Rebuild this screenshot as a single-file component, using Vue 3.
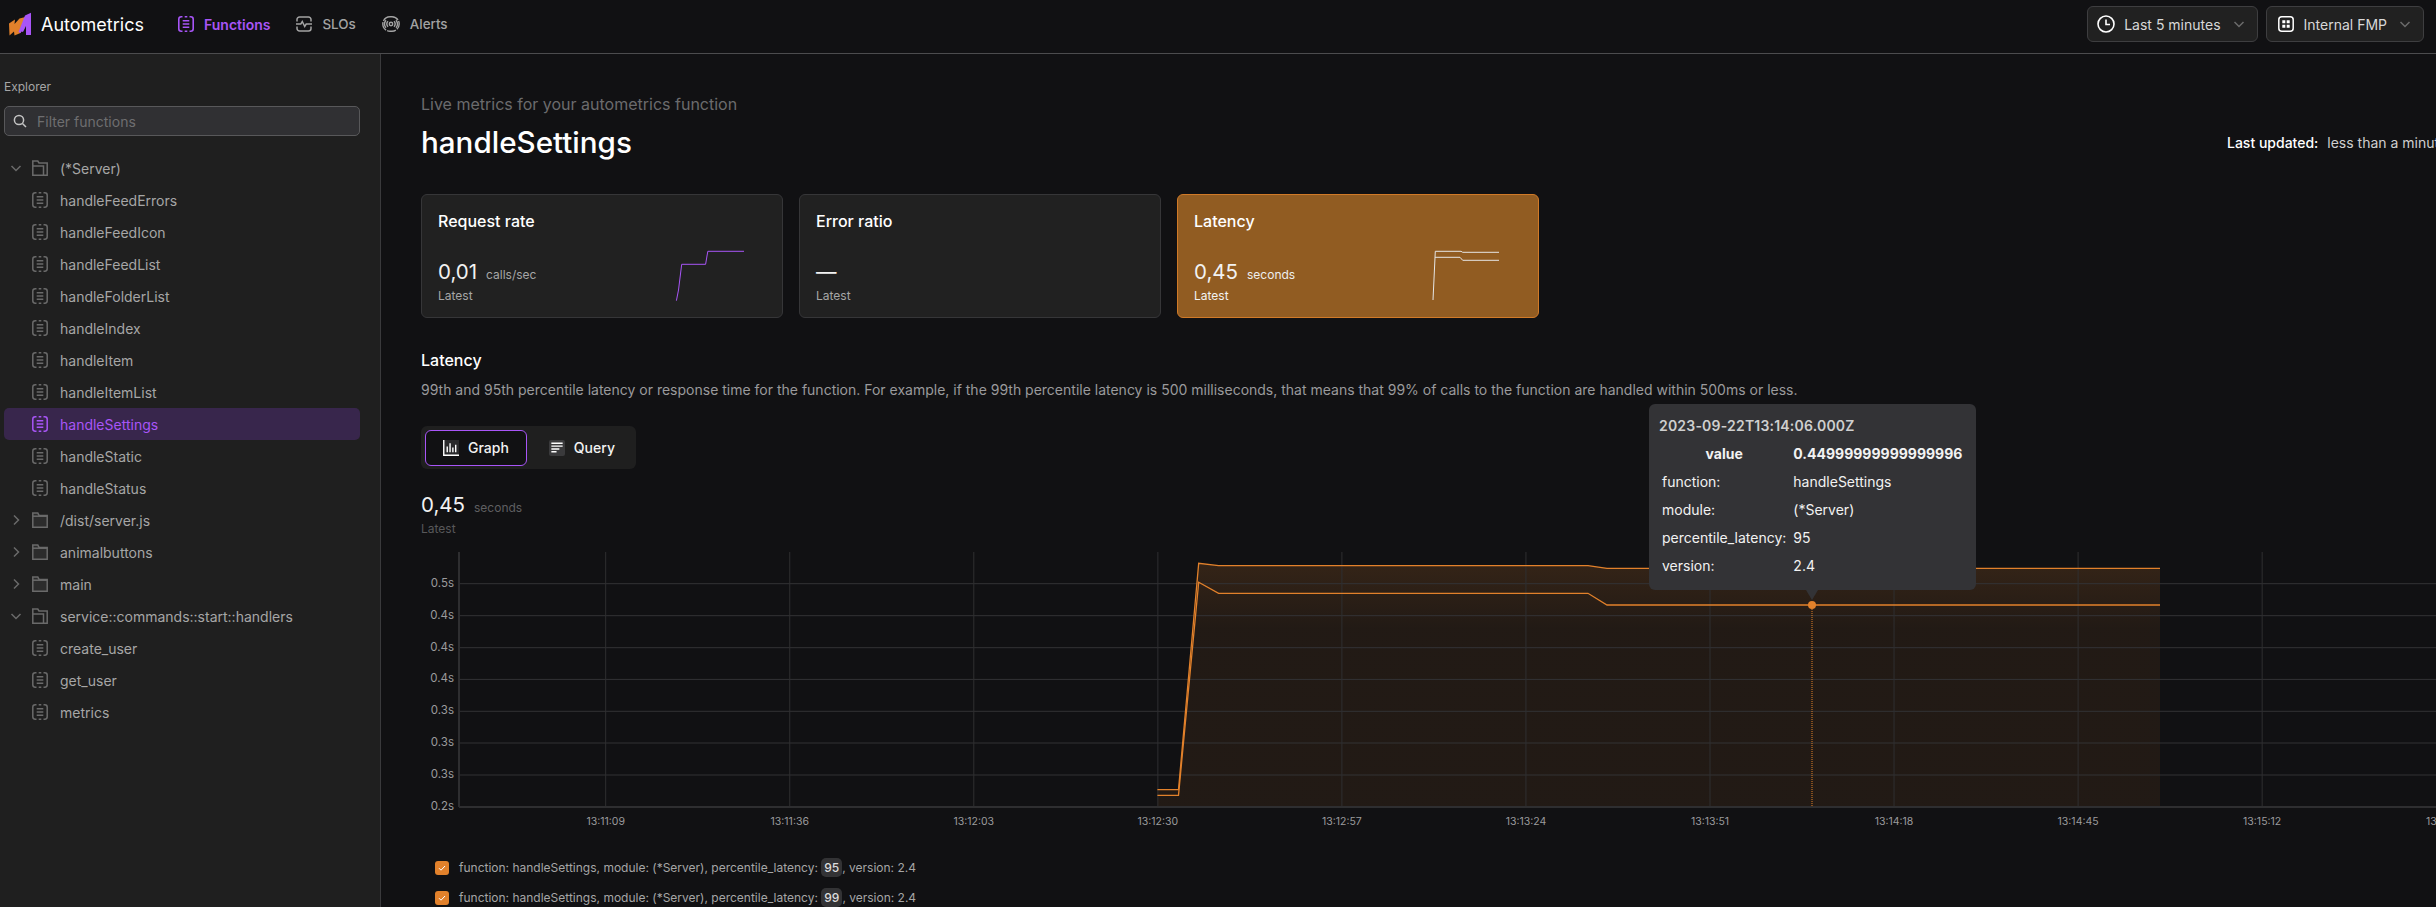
<script setup>
const tree = [
  { name: '(*Server)', kind: 'open' },
  { name: 'handleFeedErrors', kind: 'fn' },
  { name: 'handleFeedIcon', kind: 'fn' },
  { name: 'handleFeedList', kind: 'fn' },
  { name: 'handleFolderList', kind: 'fn' },
  { name: 'handleIndex', kind: 'fn' },
  { name: 'handleItem', kind: 'fn' },
  { name: 'handleItemList', kind: 'fn' },
  { name: 'handleSettings', kind: 'fn', active: true },
  { name: 'handleStatic', kind: 'fn' },
  { name: 'handleStatus', kind: 'fn' },
  { name: '/dist/server.js', kind: 'closed' },
  { name: 'animalbuttons', kind: 'closed' },
  { name: 'main', kind: 'closed' },
  { name: 'service::commands::start::handlers', kind: 'open' },
  { name: 'create_user', kind: 'fn' },
  { name: 'get_user', kind: 'fn' },
  { name: 'metrics', kind: 'fn' },
]

const cards = [
  {
    title: 'Request rate', value: '0,01', unit: 'calls/sec',
    box: '672 250 72 52',
    lines: ['675.4,300.7 677.5,290 680.7,264.3 704.6,264.3 706.8,251.3 743,251.3'],
  },
  { title: 'Error ratio', value: '—', unit: '', box: '', lines: [] },
  {
    title: 'Latency', value: '0,45', unit: 'seconds', active: true,
    box: '1429 250 72 52',
    lines: [
      '1433,300 1435.3,251.3 1461,251.3 1462.7,252.3 1499,252.3',
      '1435,257.3 1460,257.3 1462.7,260.3 1499,260.3',
    ],
  },
]

// 坐标直接用页面像素，viewBox 对齐到图表左上角
const yTicks = [
  { y: 583.7, label: '0.5s' },
  { y: 615.7, label: '0.4s' },
  { y: 647.7, label: '0.4s' },
  { y: 679.4, label: '0.4s' },
  { y: 711.3, label: '0.3s' },
  { y: 743, label: '0.3s' },
  { y: 775, label: '0.3s' },
  { y: 806.7, label: '0.2s' },
]
const xLabels = ['13:11:09', '13:11:36', '13:12:03', '13:12:30', '13:12:57', '13:13:24', '13:13:51', '13:14:18', '13:14:45', '13:15:12', '13:15:39']
const xTicks = xLabels.map((label, i) => ({ x: 605.7 + i * 184.05, label }))

const topLine = '1157.4,789.7 1178.5,789.7 1198.7,563.3 1218.6,565.7 1588,565.7 1607,568.3 2160,568.3'
const lowLine = '1157.4,795.3 1178.5,795.3 1198.7,582.3 1218.6,593.3 1588,593.3 1607,605 2160,605'
const areaTop = `1157.4,806 ${topLine} 2160,806`

const tooltipRows = [
  ['function:', 'handleSettings'],
  ['module:', '(*Server)'],
  ['percentile_latency:', '95'],
  ['version:', '2.4'],
]
const legend = ['95', '99']
</script>

<template>
  <div class="app">
    <header class="topbar">
      <div class="brand">
        <svg class="logo" width="24" height="24" viewBox="8 12 24 24">
          <path fill="#e2812b" d="M9 23.500l6-4-.5 4.500 5-5.500 6-1.500v5l-5 11-6 2.500-.5-4-4.500 4z" />
          <path fill="#a855f7" d="M31 12.700V35h-5v-9l-3 6-1.500-.5-1 1.500-2-1 6.500-16.500z" />
        </svg>
        <span>Autometrics</span>
      </div>
      <nav class="nav">
        <a class="nav-item active">
          <svg width="16" height="16" viewBox="0 0 16 16" fill="none" stroke="currentColor" stroke-width="1.600">
            <path d="M4.500 .8H3.200A2.400 2.400 0 0 0 .8 3.200v9.600a2.400 2.400 0 0 0 2.400 2.400h1.300M11.500 .8h1.300a2.400 2.400 0 0 1 2.400 2.400v9.600a2.400 2.400 0 0 1-2.400 2.400h-1.300M6.700 .8h2.600M6.700 15.200h2.600M4.700 4.800h6.600M4.700 8h6.600M4.700 11.200h6.600" />
          </svg>
          Functions
        </a>
        <a class="nav-item">
          <svg width="16" height="16" viewBox="0 0 16 16" fill="none" stroke="currentColor" stroke-width="1.500">
            <path d="M1 5.500V3.500A2.500 2.500 0 0 1 3.500 1h9A2.500 2.500 0 0 1 15 3.500v2M1 10.500v2A2.500 2.500 0 0 0 3.500 15h9a2.500 2.500 0 0 0 2.500-2.500v-2M0 8h4.800l1.500-2.500 2.400 5 1.500-2.500H16" />
          </svg>
          SLOs
        </a>
        <a class="nav-item">
          <svg width="18" height="16" viewBox="0 0 18 16" fill="none" stroke="currentColor" stroke-width="1.400">
            <rect x=".8" y=".8" width="16.400" height="14.400" rx="7.200" stroke-dasharray="9 1.200" />
            <circle cx="9" cy="8" r="1.700" />
            <path d="M6 5.300a4 4 0 0 0 0 5.400M12 5.300a4 4 0 0 1 0 5.400M4 4.200a6 6 0 0 0 0 7.600M14 4.200a6 6 0 0 1 0 7.600" />
          </svg>
          Alerts
        </a>
      </nav>
      <div class="selects">
        <button class="select">
          <svg width="18" height="18" viewBox="0 0 18 18" fill="none" stroke="#fff" stroke-width="1.600">
            <circle cx="9" cy="9" r="8" />
            <path d="M9 4.500V9.500H13" />
          </svg>
          <span>Last 5 minutes</span>
          <svg class="chev" width="12" height="12" viewBox="0 0 12 12" fill="none" stroke="currentColor" stroke-width="1.500"><path d="M1.500 4l4.500 4.500L10.500 4" /></svg>
        </button>
        <button class="select">
          <svg class="grid-ico" width="16" height="16" viewBox="0 0 16 16" fill="none" stroke="#fff" stroke-width="1.500">
            <rect x=".8" y=".8" width="14.400" height="14.400" rx="3" />
            <path fill="#fff" stroke="none" d="M4.300 4.300h3v3h-3zM8.700 4.300h3v3h-3zM4.300 8.700h3v3h-3zM8.700 8.700h3v3h-3z" />
          </svg>
          <span>Internal FMP</span>
          <svg class="chev" width="12" height="12" viewBox="0 0 12 12" fill="none" stroke="currentColor" stroke-width="1.500"><path d="M1.500 4l4.500 4.500L10.500 4" /></svg>
        </button>
      </div>
    </header>

    <div class="body">
      <aside class="sidebar">
        <div class="explorer">Explorer</div>
        <label class="filter">
          <svg width="14" height="14" viewBox="0 0 14 14" fill="none" stroke="#c4c4c4" stroke-width="1.500">
            <circle cx="6" cy="6" r="4.600" />
            <path d="M9.500 9.500L13 13" />
          </svg>
          <input placeholder="Filter functions" />
        </label>
        <ul class="tree">
          <li v-for="item in tree" :key="item.name" class="row" :class="{ active: item.active }">
            <span class="twist">
              <svg v-if="item.kind === 'open'" width="12" height="12" viewBox="0 0 12 12" fill="none" stroke="currentColor" stroke-width="1.500"><path d="M1.500 4l4.500 4.500L10.500 4" /></svg>
              <svg v-else-if="item.kind === 'closed'" width="12" height="12" viewBox="0 0 12 12" fill="none" stroke="currentColor" stroke-width="1.500"><path d="M4 1.500L8.500 6 4 10.500" /></svg>
            </span>
            <svg v-if="item.kind === 'fn'" class="ico" width="16" height="16" viewBox="0 0 16 16" fill="none" stroke="currentColor" stroke-width="1.500">
              <path d="M4.500 .8H3.200A2.400 2.400 0 0 0 .8 3.200v9.600a2.400 2.400 0 0 0 2.400 2.400h1.300M11.500 .8h1.300a2.400 2.400 0 0 1 2.400 2.400v9.600a2.400 2.400 0 0 1-2.400 2.400h-1.300M6.700 .8h2.600M6.700 15.200h2.600M4.700 4.800h6.600M4.700 8h6.600M4.700 11.200h6.600" />
            </svg>
            <svg v-else-if="item.kind === 'open'" class="ico" width="16" height="16" viewBox="0 0 16 16" fill="none" stroke="currentColor" stroke-width="1.500">
              <path d="M.8 15.200V1h5l1.200 2h8.200v12.200zM.8 6H11.500v9.200" />
            </svg>
            <svg v-else class="ico" width="16" height="16" viewBox="0 0 16 16" stroke="currentColor" stroke-width="1.500" fill="#2c2c2c">
              <path d="M.8 15.200V1h5l1.200 2.400h8.200v11.800z" />
              <path d="M.8 4.200h14.400" fill="none" />
            </svg>
            <span class="label">{{ item.name }}</span>
          </li>
        </ul>
      </aside>

      <main class="main">
        <p class="sub">Live metrics for your autometrics function</p>
        <div class="title-row">
          <h1>handleSettings</h1>
          <div class="updated"><b>Last updated:</b> less than a minute ago</div>
        </div>

        <section class="cards">
          <div v-for="c in cards" :key="c.title" class="card" :class="{ active: c.active }">
            <div class="card-text">
              <div class="card-title">{{ c.title }}</div>
              <div class="stat"><span class="num">{{ c.value }}</span><span class="unit">{{ c.unit }}</span></div>
              <div class="latest">Latest</div>
            </div>
            <svg v-if="c.box" class="spark" width="72" height="52" :viewBox="c.box" fill="none">
              <polyline v-for="l in c.lines" :key="l" :points="l" />
            </svg>
          </div>
        </section>

        <h2>Latency</h2>
        <p class="desc">99th and 95th percentile latency or response time for the function. For example, if the 99th percentile latency is 500 milliseconds, that means that 99% of calls to the function are handled within 500ms or less.</p>

        <div class="tabs">
          <button class="tab on">
            <svg width="16" height="16" viewBox="0 0 17 17">
              <rect x="1" y="0" width="16" height="16" fill="#2a2a2c" />
              <path fill="none" stroke="#fff" stroke-width="1.500" d="M.8 0V16.200H17M4.500 13V7M7.500 13V3.500M10.500 13V8M13.500 13V5" />
            </svg>
            Graph
          </button>
          <button class="tab">
            <svg width="16" height="16" viewBox="0 0 17 17">
              <rect width="17" height="17" rx="2" fill="#3a3a3c" />
              <path fill="none" stroke="#fff" stroke-width="1.500" d="M2.500 3.500H14.500M2.500 6.500H14.500M2.500 9.500H11M2.500 12.500H8" />
            </svg>
            Query
          </button>
        </div>

        <div class="stat big"><span class="num">0,45</span><span class="unit">seconds</span></div>
        <div class="latest dim">Latest</div>

        <div class="chart">
          <svg width="2060" height="290" viewBox="421 544 2060 290" class="plot">
            <defs>
              <linearGradient id="fade" gradientUnits="userSpaceOnUse" x1="0" y1="563" x2="0" y2="806">
                <stop offset="0" stop-color="#e2812b" stop-opacity="0.17" />
                <stop offset="0.27" stop-color="#e2812b" stop-opacity="0.08" />
                <stop offset="1" stop-color="#e2812b" stop-opacity="0.08" />
              </linearGradient>
            </defs>
            <polygon :points="areaTop" fill="url(#fade)" />
            <line v-for="t in yTicks" :key="t.y" x1="459" x2="2481" :y1="t.y" :y2="t.y" class="grid" />
            <line v-for="t in xTicks" :key="t.x" :x1="t.x" :x2="t.x" y1="552" y2="806" class="grid v" />
            <line x1="459" x2="459" y1="552" y2="807" class="axis" />
            <line x1="459" x2="2481" y1="807" y2="807" class="axis" />
            <text v-for="t in yTicks" :key="'y' + t.y" x="454" :y="t.y + 3" text-anchor="end" class="tick">{{ t.label }}</text>
            <text v-for="t in xTicks" :key="t.label" :x="t.x" y="825" text-anchor="middle" class="tick x">{{ t.label }}</text>
            <polyline :points="topLine" class="series" />
            <polyline :points="lowLine" class="series" />
            <line x1="1812" x2="1812" y1="605" y2="806" class="cursor" />
            <circle cx="1812" cy="605" r="4" fill="#e2812b" />
          </svg>

          <div class="tip">
            <div class="tip-time">2023-09-22T13:14:06.000Z</div>
            <table>
              <tr class="tip-value"><th>value</th><th class="val">0.44999999999999996</th></tr>
              <tr v-for="r in tooltipRows" :key="r[0]"><td>{{ r[0] }}</td><td class="val">{{ r[1] }}</td></tr>
            </table>
          </div>
        </div>

        <ul class="legend">
          <li v-for="p in legend" :key="p">
            <span class="check">
              <svg width="8" height="8" viewBox="0 0 8 8" fill="none" stroke="#fff" stroke-width="1"><path d="M1 4.200l2 2L7 2" /></svg>
            </span>
            <span>function: handleSettings, module: (*Server), percentile_latency: <em class="pill">{{ p }}</em>, version: 2.4</span>
          </li>
        </ul>
      </main>
    </div>
  </div>
</template>

<style scoped>
.app {
  width: 2436px;
  height: 907px;
  overflow: hidden;
  display: flex;
  flex-direction: column;
  background: #111113;
  color: #fff;
  font-family: Inter, "Liberation Sans", sans-serif;
  font-size: 14px;
}
.topbar {
  flex: none;
  height: 54px;
  box-sizing: border-box;
  border-bottom: 1px solid #4c4c4e;
  display: flex;
  align-items: center;
  padding: 0 12px 5px 8px;
}
.brand {
  display: flex;
  align-items: center;
  gap: 9px;
  font-size: 18px;
  width: 170px;
}
.logo {
  flex: none;
}
.nav {
  display: flex;
  gap: 26px;
}
.nav-item {
  display: flex;
  align-items: center;
  gap: 10px;
  font-size: 13.400px;
  font-weight: 500;
  color: #a3a3a3;
}
.nav-item.active {
  color: #a855f7;
  font-size: 14px;
  font-weight: 600;
}
.selects {
  margin-left: auto;
  display: flex;
  gap: 8px;
}
.select {
  height: 36px;
  box-sizing: border-box;
  display: flex;
  align-items: center;
  gap: 9px;
  padding: 0 12px 0 9px;
  background: #212121;
  border: 1px solid #3e3e40;
  border-radius: 6px;
  color: #d8d8d8;
  font: inherit;
}
.select .grid-ico {
  margin: 0 1px 0 2px;
}
.select .chev {
  margin-left: 3px;
  color: #6b6b6b;
}
.body {
  flex: 1;
  display: flex;
  min-height: 0;
}
.sidebar {
  flex: none;
  width: 381px;
  box-sizing: border-box;
  background: #1f1f1f;
  border-right: 1px solid #3a3a3c;
  padding: 24px 20px 0 4px;
}
.explorer {
  font-size: 12px;
  line-height: 18px;
  color: #a6a6a6;
}
.filter {
  margin-top: 10px;
  height: 30px;
  box-sizing: border-box;
  display: flex;
  align-items: center;
  gap: 10px;
  padding: 0 8px;
  background: #303033;
  border: 1px solid #58585a;
  border-radius: 5px;
}
.filter input {
  flex: 1;
  background: none;
  border: 0;
  outline: 0;
  padding: 0;
  font: inherit;
  font-size: 14px;
  color: #ccc;
}
.filter input::placeholder {
  color: #6e6e70;
}
.tree {
  list-style: none;
  margin: 16px 0 0;
  padding: 0;
}
.row {
  height: 32px;
  display: flex;
  align-items: center;
  border-radius: 5px;
  color: #a6a6a6;
  padding-left: 6px;
}
.twist {
  width: 22px;
  display: flex;
  color: #6a6a6a;
}
.ico {
  flex: none;
  color: #6a6a6a;
  margin-right: 12px;
}
.row.active {
  background: #38264c;
  color: #a855f7;
}
.row.active .ico {
  color: #a855f7;
}
.main {
  flex: 1;
  min-width: 0;
  overflow: hidden;
  padding: 40px 0 0 40px;
}
.sub {
  margin: 0;
  font-size: 16px;
  line-height: 20px;
  color: #6b6b6d;
}
.title-row {
  margin-top: 8px;
  display: flex;
  align-items: center;
  height: 40px;
}
h1 {
  margin: 0;
  font-size: 29.600px;
  font-weight: 500;
  line-height: 40px;
  width: 1806px;
  flex: none;
}
.updated {
  white-space: nowrap;
  color: #cfcfcf;
}
.updated b {
  font-weight: 500;
  color: #fff;
  margin-right: 5px;
}
.cards {
  margin-top: 32px;
  display: grid;
  grid-template-columns: repeat(3, 362px);
  gap: 16px;
}
.card {
  height: 124px;
  box-sizing: border-box;
  display: flex;
  justify-content: space-between;
  padding: 14px 16px 15px;
  background: #212121;
  border: 1px solid #363638;
  border-radius: 6px;
}
.card.active {
  background: #915c22;
  border-color: #d07a28;
}
.card-title {
  font-size: 16px;
  font-weight: 500;
  line-height: 24px;
  margin-bottom: 25px;
}
.stat {
  display: flex;
  align-items: baseline;
  height: 28px;
  line-height: 28px;
}
.num {
  font-size: 20.500px;
  color: #f2f2f2;
}
.unit {
  margin-left: 9px;
  font-size: 12px;
  color: #a6a6a6;
}
.card.active .unit {
  color: #eee;
}
.latest {
  margin-top: 1px;
  font-size: 12px;
  line-height: 18px;
  color: #a6a6a6;
}
.card.active .latest {
  color: #f2f2f2;
}
.spark {
  align-self: flex-end;
  margin-right: 21px;
  stroke: #a855f7;
  stroke-width: 1;
}
.card.active .spark {
  stroke: #e6e6e6;
}
h2 {
  margin: 30px 0 0;
  font-size: 16px;
  font-weight: 500;
  line-height: 24px;
}
.desc {
  margin: 8px 0 0;
  line-height: 20px;
  color: #9a9a9c;
  white-space: nowrap;
}
.tabs {
  margin-top: 26px;
  width: 215px;
  height: 43px;
  box-sizing: border-box;
  display: flex;
  align-items: center;
  gap: 4px;
  padding: 0 4px;
  background: #1f1f1f;
  border-radius: 6px;
}
.tab {
  height: 36px;
  box-sizing: border-box;
  display: flex;
  align-items: center;
  gap: 9px;
  padding: 0 17px;
  background: none;
  border: 1px solid transparent;
  border-radius: 6px;
  color: #f2f2f2;
  font: inherit;
  font-weight: 500;
}
.tab.on {
  background: #111113;
  border-color: #a855f7;
}
.big {
  margin-top: 22px;
}
.latest.dim {
  color: #58585a;
}
.big .unit {
  color: #5f5f61;
}
.chart {
  position: relative;
  margin-top: 6px;
  height: 290px;
}
.plot {
  display: block;
}
.grid {
  stroke: #333335;
  stroke-width: 1;
}
.grid.v {
  stroke: #2f2f31;
}
.axis {
  stroke: #2e2e30;
  stroke-width: 2;
}
.tick {
  fill: #9b9b9d;
  font-size: 11.500px;
}
.tick.x {
  font-size: 10.500px;
}
.series {
  fill: none;
  stroke: #e2812b;
  stroke-width: 1.300;
}
.cursor {
  stroke: #e2812b;
  stroke-width: 1;
  stroke-dasharray: 1 1;
}
.tip {
  position: absolute;
  left: 1228px;
  top: -140px;
  width: 327px;
  height: 186px;
  box-sizing: border-box;
  padding: 12px 10px 0 10px;
  background: #333336;
  border-radius: 6px;
  font-size: 14px;
}
.tip::after {
  content: "";
  position: absolute;
  left: 157px;
  bottom: -10px;
  border: 6px solid transparent;
  border-bottom: 0;
  border-top: 10px solid #333336;
}
.tip-time {
  font-weight: 600;
  line-height: 20px;
  letter-spacing: 0.2px;
  color: #cfcfcf;
}
.tip table {
  border-collapse: collapse;
  margin-top: 3px;
  margin-left: 3px;
}
.tip td,
.tip th {
  height: 28px;
  padding: 0;
  color: #f2f2f2;
  font-weight: 400;
}
.tip th {
  font-weight: 700;
}
.tip .val {
  padding-left: 7px;
  text-align: left;
}
.legend {
  list-style: none;
  margin: 25px 0 0;
  padding: 0 0 0 14px;
  display: flex;
  flex-direction: column;
  gap: 12px;
}
.legend li {
  display: flex;
  align-items: center;
  gap: 10px;
  font-size: 12px;
  line-height: 18px;
  color: #a6a6a6;
}
.check {
  width: 14px;
  height: 14px;
  border-radius: 3px;
  background: #e2812b;
  display: flex;
  align-items: center;
  justify-content: center;
}
.pill {
  font-style: normal;
  font-weight: 500;
  color: #ddd;
  background: #333335;
  border-radius: 5px;
  padding: 2px 3px;
}
</style>

<style>
html,
body {
  margin: 0;
  overflow: hidden;
  background: #111113;
}
</style>
